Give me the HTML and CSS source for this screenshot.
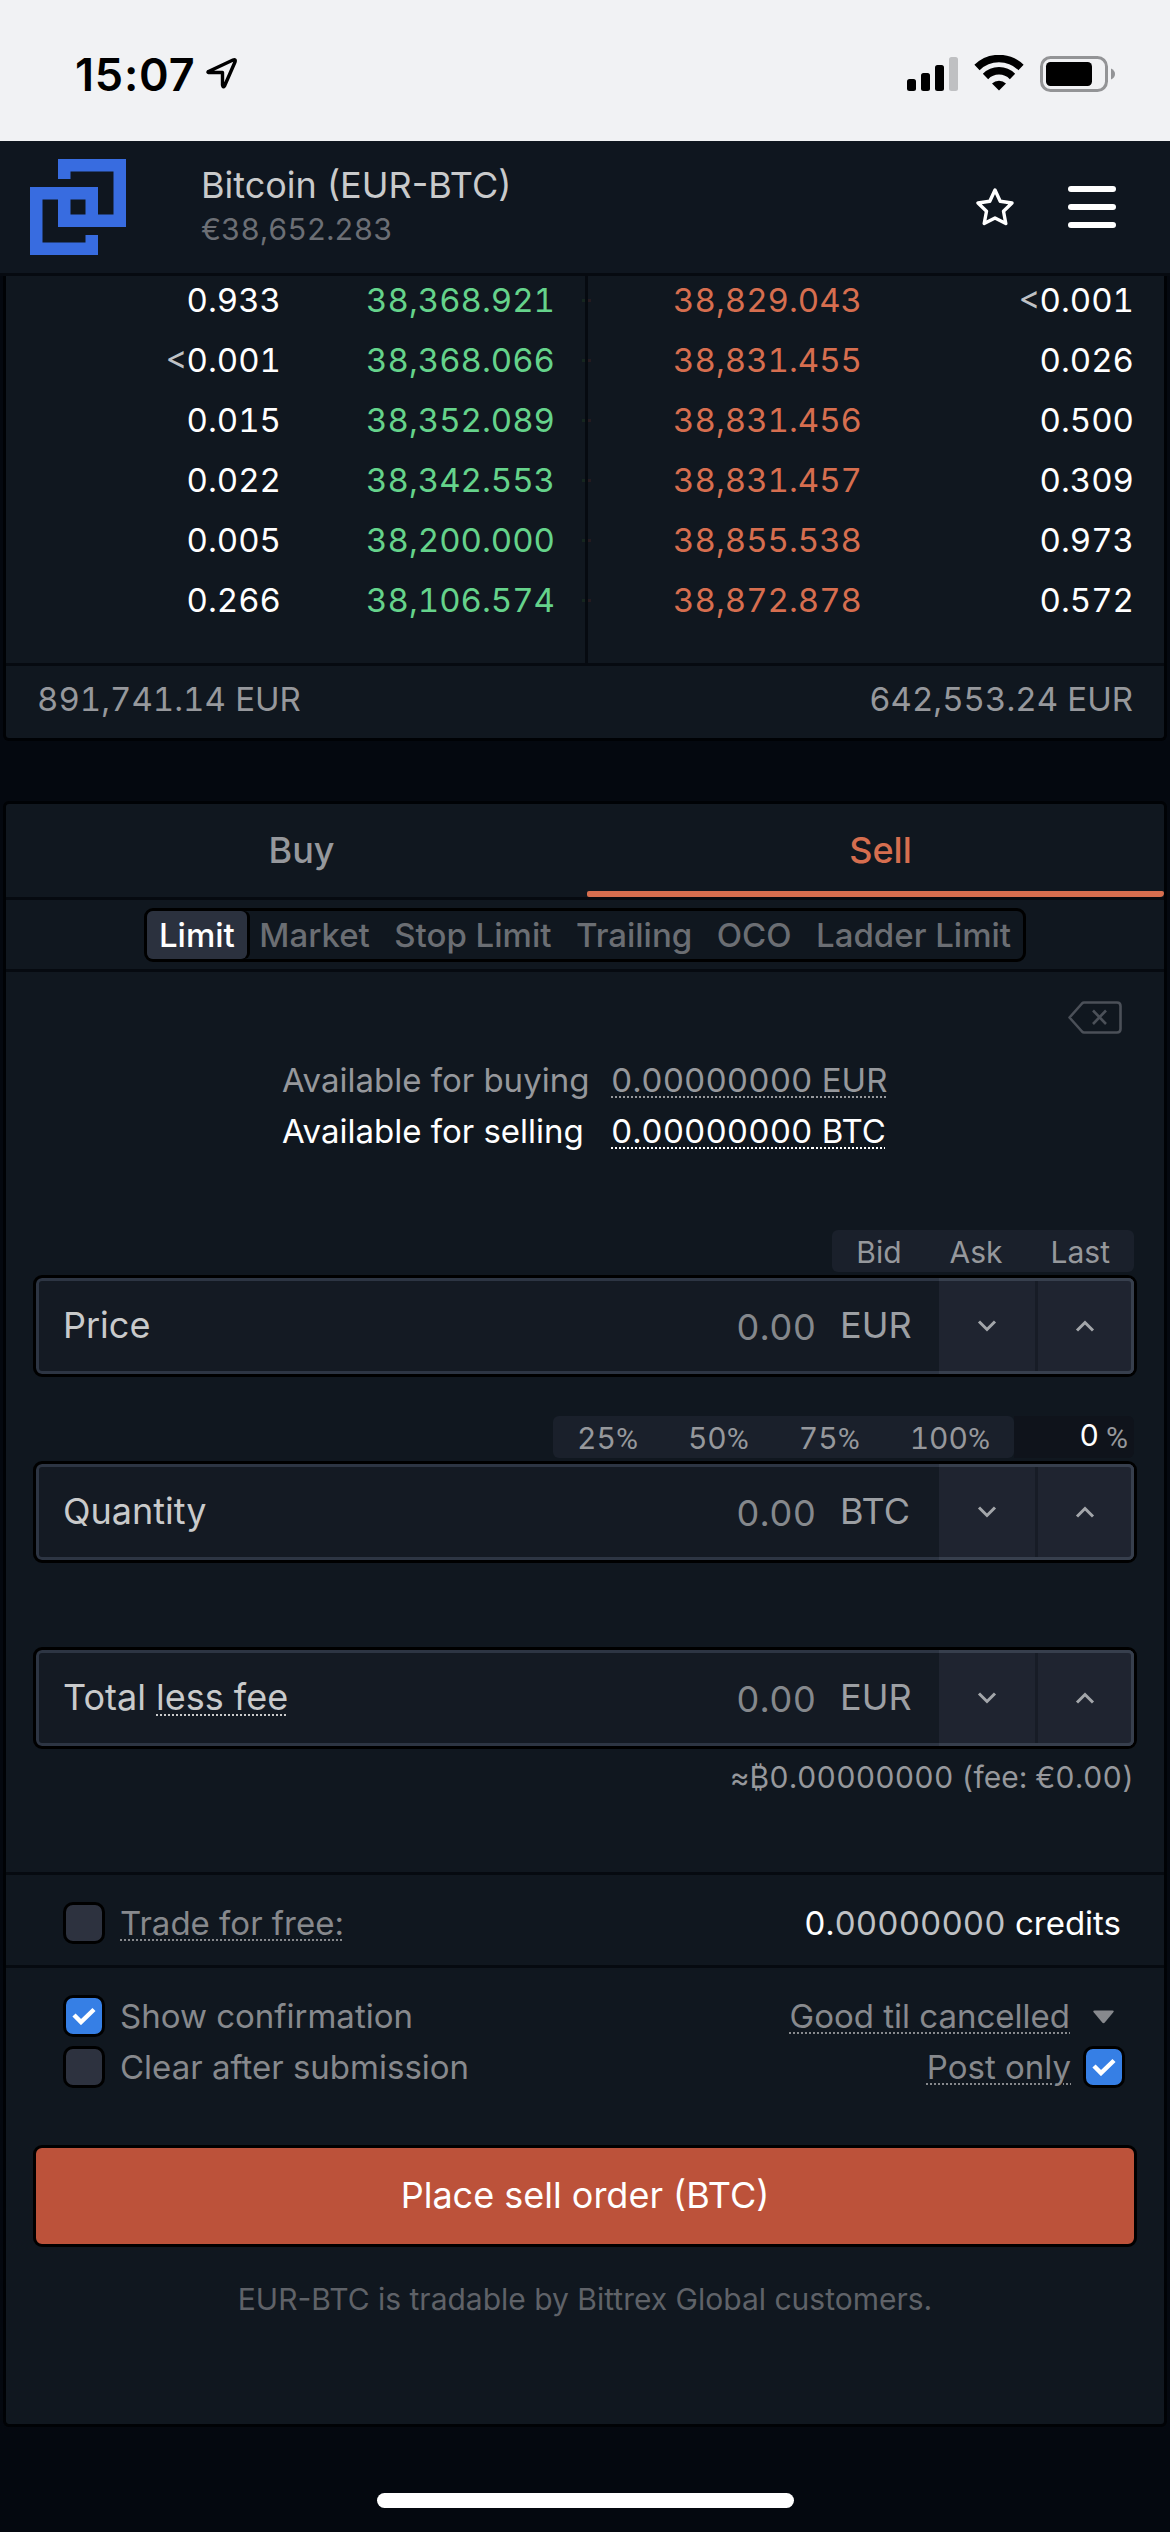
FILE: index.html
```html
<!DOCTYPE html>
<html lang="en">
<head>
  <meta charset="UTF-8">
  <meta name="viewport" content="width=device-width, initial-scale=1.0">
  <title>Bitcoin (EUR-BTC)</title>
  <link rel="stylesheet" href="styles.css">
</head>
<body>
  <div class="status-bar">
    <span class="time">15:07</span>
    <svg class="location" width="32" height="32" viewBox="0 0 32 32"><path d="M2.5 14.5 L27 3 Q30 1.8 29 5 L18.500 29 Q17 31 16.500 28 V15.500 H4 Q1 15.500 2.500 14.500 Z" fill="none" stroke="#000" stroke-width="3.4" stroke-linejoin="round"/></svg>
    <div class="status-icons">
      <svg width="51" height="36" viewBox="0 0 51 36">
        <rect x="0" y="23" width="9" height="12" rx="2.500"/>
        <rect x="14" y="17" width="9" height="18" rx="2.500"/>
        <rect x="28" y="9" width="9" height="26" rx="2.500"/>
        <rect x="42" y="1" width="9" height="34" rx="2.500" fill="#bfc0c2"/>
      </svg>
      <svg class="wifi" width="50" height="36" viewBox="0 0 50 36">
        <path d="M3 12.500 A31.500 31.500 0 0 1 47 12.500" fill="none" stroke="#000" stroke-width="7.500"/>
        <path d="M11.500 21.500 A19 19 0 0 1 38.500 21.500" fill="none" stroke="#000" stroke-width="7.500"/>
        <path d="M25 35.500 L18 28.500 A10 10 0 0 1 32 28.500 Z"/>
      </svg>
      <svg width="76" height="36" viewBox="0 0 76 36">
        <rect x="1.500" y="1.500" width="65" height="33" rx="9" fill="none" stroke="#939496" stroke-width="3"/>
        <rect x="6" y="6" width="46" height="24" rx="4.500"/>
        <path d="M71 12.500 Q75 14.500 75 18 Q75 21.500 71 23.500 Z" fill="#939496"/>
      </svg>
    </div>
  </div>

  <header class="header">
    <svg class="logo" width="96" height="96" viewBox="0 0 96 96" fill="none" stroke="#386ce0" stroke-width="12.500">
      <path d="M34.250 20 V6.250 H89.750 V61.750 H34.250 V34"/>
      <path d="M61.750 76 V89.750 H6.250 V34.250 H61.750 V62"/>
    </svg>
    <div class="market">
      <h1>Bitcoin (EUR-BTC)</h1>
      <div class="last-price">€38,652.283</div>
    </div>
    <svg class="star" width="38" height="38" viewBox="0 0 38 38"><path d="M19 2 L24.200 13.300 L36 15 L27.500 23.300 L29.800 35.500 L19 30 L8.200 35.500 L10.500 23.300 L2 15 L13.800 13.300 Z" fill="none" stroke="#fff" stroke-width="3.400" stroke-linejoin="round"/></svg>
    <div class="menu"><i></i><i></i><i></i></div>
  </header>

  <section class="panel order-book">
    <div class="book">
      <div class="side bids">
        <div class="row"><span class="amount">0.933</span><span class="price">38,368.921</span></div>
        <div class="row"><span class="amount"><em>&lt;</em>0.001</span><span class="price">38,368.066</span></div>
        <div class="row"><span class="amount">0.015</span><span class="price">38,352.089</span></div>
        <div class="row"><span class="amount">0.022</span><span class="price">38,342.553</span></div>
        <div class="row"><span class="amount">0.005</span><span class="price">38,200.000</span></div>
        <div class="row"><span class="amount">0.266</span><span class="price">38,106.574</span></div>
      </div>
      <div class="side asks">
        <div class="row"><span class="price">38,829.043</span><span class="amount"><em>&lt;</em>0.001</span></div>
        <div class="row"><span class="price">38,831.455</span><span class="amount">0.026</span></div>
        <div class="row"><span class="price">38,831.456</span><span class="amount">0.500</span></div>
        <div class="row"><span class="price">38,831.457</span><span class="amount">0.309</span></div>
        <div class="row"><span class="price">38,855.538</span><span class="amount">0.973</span></div>
        <div class="row"><span class="price">38,872.878</span><span class="amount">0.572</span></div>
      </div>
    </div>
    <div class="totals">
      <span><b>891,741.14</b> EUR</span>
      <span><b>642,553.24</b> EUR</span>
    </div>
  </section>

  <section class="panel order-form">
    <div class="tabs">
      <div class="tab">Buy</div>
      <div class="tab active">Sell</div>
    </div>
    <div class="types">
      <div class="type-list">
        <span class="type active">Limit</span>
        <span class="type">Market</span>
        <span class="type">Stop Limit</span>
        <span class="type">Trailing</span>
        <span class="type">OCO</span>
        <span class="type">Ladder Limit</span>
      </div>
    </div>

    <div class="clear">
      <svg width="54" height="33" viewBox="0 0 54 33" fill="none" stroke="#4b5058" stroke-width="2.600" stroke-linejoin="round"><path d="M16 1.500 H49 Q52.500 1.500 52.500 5 V28 Q52.500 31.500 49 31.500 H16 Q15 31.500 14 30.500 L1.500 16.500 L14 2.500 Q15 1.500 16 1.500 Z"/><path d="M25 9.500 L38 23 M38 9.500 L25 23"/></svg>
    </div>

    <div class="available">
      <span>Available for buying</span><span class="hint"><b>0.00000000</b> EUR</span>
      <span class="current">Available for selling</span><span class="hint current"><b>0.00000000</b> BTC</span>
    </div>

    <div class="presets">
      <div class="preset-list price-presets"><span>Bid</span><span>Ask</span><span>Last</span></div>
    </div>
    <div class="field">
      <label>Price</label>
      <span class="value">0.00</span><span class="unit">EUR</span>
      <button class="step"><svg width="20" height="14" viewBox="0 0 20 14"><path d="M2 2.500 L10 10.500 L18 2.500"/></svg></button>
      <button class="step up"><svg width="20" height="14" viewBox="0 0 20 14"><path d="M2 11.500 L10 3.500 L18 11.500"/></svg></button>
    </div>

    <div class="presets quantity">
      <div class="preset-list percent-presets"><span><b>25</b><small>%</small></span><span><b>50</b><small>%</small></span><span><b>75</b><small>%</small></span><span><b>100</b><small>%</small></span></div>
      <div class="percent"><b>0</b><small>%</small></div>
    </div>
    <div class="field">
      <label>Quantity</label>
      <span class="value">0.00</span><span class="unit">BTC</span>
      <button class="step"><svg width="20" height="14" viewBox="0 0 20 14"><path d="M2 2.500 L10 10.500 L18 2.500"/></svg></button>
      <button class="step up"><svg width="20" height="14" viewBox="0 0 20 14"><path d="M2 11.500 L10 3.500 L18 11.500"/></svg></button>
    </div>

    <div class="field total">
      <label>Total <span class="hint">less fee</span></label>
      <span class="value">0.00</span><span class="unit">EUR</span>
      <button class="step"><svg width="20" height="14" viewBox="0 0 20 14"><path d="M2 2.500 L10 10.500 L18 2.500"/></svg></button>
      <button class="step up"><svg width="20" height="14" viewBox="0 0 20 14"><path d="M2 11.500 L10 3.500 L18 11.500"/></svg></button>
    </div>
    <div class="estimate">≈₿0.00000000 (fee: €0.00)</div>

    <div class="credits">
      <i class="checkbox"></i><span class="label hint">Trade for free:</span>
      <span class="balance"><b>0.<em>00000000</em></b> credits</span>
    </div>

    <div class="options">
      <div class="option">
        <i class="checkbox checked"><svg width="24" height="18" viewBox="0 0 24 18"><path d="M2 8 L9 15 L22 2.500"/></svg></i>
        <span class="label">Show confirmation</span>
        <span class="right hint">Good til cancelled</span>
        <svg class="caret" width="21" height="14" viewBox="0 0 21 14"><path d="M1.500 0.500 H19.500 Q21.500 0.500 20.300 2.300 L11.800 12.500 Q10.500 13.800 9.200 12.500 L0.700 2.300 Q-0.500 0.500 1.500 0.500 Z" fill="#87898d"/></svg>
      </div>
      <div class="option">
        <i class="checkbox"></i>
        <span class="label">Clear after submission</span>
        <span class="right hint">Post only</span>
        <i class="checkbox checked"><svg width="24" height="18" viewBox="0 0 24 18"><path d="M2 8 L9 15 L22 2.500"/></svg></i>
      </div>
    </div>

    <button class="submit">Place sell order (BTC)</button>
    <p class="note">EUR-BTC is tradable by Bittrex Global customers.</p>
  </section>

  <div class="home-indicator"></div>
</body>
</html>
```

FILE: styles.css
```css
* {
  box-sizing: border-box;
}

body {
  margin: 0;
  width: 1170px;
  height: 2532px;
  overflow: hidden;
  display: flex;
  flex-direction: column;
  background: #04080f;
  color: #96989c;
  font-family: Inter, "Liberation Sans", sans-serif;
  font-size: 33px;
  white-space: nowrap;
}

b {
  font-weight: 400;
}

b, .row, .value, .last-price, .estimate {
  font-feature-settings: "tnum";
}

em {
  font-style: normal;
  color: #bfc1c4;
}

button {
  border: 0;
  padding: 0;
  font: inherit;
  color: inherit;
}

.hint {
  text-decoration: underline dotted 2px;
  text-underline-offset: 4px;
}

/* Status bar */
.status-bar {
  flex: none;
  height: 141px;
  display: flex;
  align-items: flex-start;
  padding: 55px 54px 0 75px;
  background: #f1f2f4;
}

.time {
  color: #000;
  font-size: 45px;
  font-weight: 600;
  line-height: 39px;
  letter-spacing: 0.8px;
}

.location {
  margin: 2px 0 0 11px;
}

.status-icons {
  display: flex;
  margin-left: auto;
}

.status-icons svg:first-child {
  margin-top: 1px;
}

.wifi {
  margin: 0 16px 0 16px;
}

.status-icons svg:last-child {
  margin-top: 1px;
}

/* Header */
.header {
  flex: none;
  position: relative;
  z-index: 1;
  height: 135px;
  display: flex;
  align-items: flex-start;
  padding: 18px 54px 0 30px;
  background: #0f161f;
  border-bottom: 3px solid #060a10;
}

.market {
  flex: 1;
  padding-left: 75px;
}

h1 {
  margin: 0;
  color: #c9cacb;
  font-size: 36px;
  font-weight: 400;
  line-height: 52px;
}

.last-price {
  color: #6c6f75;
  font-size: 30px;
  line-height: 36px;
}

.star {
  margin: 29px 54px 0 0;
}

.menu {
  display: flex;
  flex-direction: column;
  gap: 12px;
  padding-top: 27px;
}

.menu i {
  width: 48px;
  height: 6px;
  border-radius: 3px;
  background: #fff;
}

/* Panels */
.panel {
  flex: none;
  margin: 0 3px 0 3px;
  border: 3px solid #000205;
  border-radius: 6px;
  background: #10171f;
}

/* Order book */
.order-book {
  border-top: 0;
  border-radius: 0 0 6px 6px;
}

.book {
  height: 390px;
  display: flex;
  border-bottom: 3px solid #060a10;
}

.side {
  flex: 1;
  margin-top: -6px;
}

.bids {
  flex: 0 0 582px;
  border-right: 3px solid #060a10;
}

.row {
  height: 60px;
  display: flex;
  line-height: 60px;
  text-align: right;
  background: linear-gradient(#16261f, #16261f) right 29px / 3px 3px no-repeat;
}

.asks .row {
  background: linear-gradient(#251b20, #251b20) left 29px / 3px 3px no-repeat;
  background-position: 0 29px;
}

.amount {
  color: #fff;
}

.bids .amount {
  width: 275px;
}

.bids .price {
  width: 274px;
  color: #65d38b;
}

.asks .price {
  width: 274px;
  color: #d66e4f;
}

.asks .amount {
  width: 272px;
}

.totals {
  height: 72px;
  display: flex;
  justify-content: space-between;
  padding: 0 31px;
  line-height: 66px;
}

/* Order form */
.order-form {
  height: 1626px;
  margin-top: 60px;
}

.tabs {
  height: 96px;
  display: flex;
  border-bottom: 3px solid #060a10;
}

.tab {
  flex: 1;
  position: relative;
  height: 93px;
  padding-left: 12px;
  text-align: center;
  font-size: 36px;
  font-weight: 500;
  line-height: 92px;
}

.tab.active {
  color: #d66e4f;
}

.tab.active::after {
  content: "";
  position: absolute;
  left: 2px;
  right: 0;
  bottom: 0;
  height: 6px;
  border-radius: 3px 3px 6px 3px;
  background: #d66e4f;
}

.types {
  height: 72px;
  display: flex;
  justify-content: center;
  padding-top: 8px;
  border-bottom: 3px solid #060a10;
}

.type-list {
  height: 54px;
  display: flex;
  border: 3px solid #000;
  border-radius: 9px;
}

.type {
  padding: 0 12.25px;
  color: #6b6e73;
  font-weight: 500;
  line-height: 48px;
}

.type.active {
  color: #fff;
  background: #2b313e;
  border-radius: 6px;
  box-shadow: 3px 0 0 #000;
}

.clear {
  height: 72px;
  display: flex;
  justify-content: flex-end;
  padding: 29px 42px 0 0;
}

.available {
  display: grid;
  grid-template-columns: 329px auto;
  padding: 11px 0 0 276px;
  line-height: 51px;
}

.available .current {
  color: #fff;
}

.available .hint {
  justify-self: start;
}

.presets {
  height: 42px;
  display: flex;
  justify-content: flex-end;
  margin: 73px 30px 3px 0;
  font-size: 30px;
  line-height: 44px;
}

.preset-list {
  display: flex;
  padding: 0 24px;
  border-radius: 6px;
  background: #1a202b;
}

.price-presets {
  gap: 48px;
}

.percent-presets {
  gap: 50px;
}

.presets small {
  font-family: Roboto, sans-serif;
  font-size: 30px;
}

.presets.quantity {
  margin-top: 39px;
}

.percent {
  width: 120px;
  display: flex;
  justify-content: flex-end;
  padding-right: 6px;
  background: #0f131b;
  border-radius: 0 6px 6px 0;
}

.percent b {
  color: #fff;
  line-height: 39px;
}

.percent small {
  margin-left: 7px;
}

.field {
  height: 102px;
  display: flex;
  margin: 0 27px;
  border: 3px solid #000;
  border-radius: 9px;
  background: #141a23;
  box-shadow: inset 0 0 0 3px #2d3543;
  font-size: 36px;
  line-height: 95px;
}

.field label {
  flex: 1;
  padding-left: 27px;
  color: #c9cacb;
}

.value {
  color: #85888c;
  line-height: 98px;
}

.unit {
  width: 99px;
  margin-left: 24px;
  color: #9c9fa3;
}

.step {
  width: 99px;
  padding-right: 3px;
  display: flex;
  align-items: center;
  justify-content: center;
  background: #1f2430;
  box-shadow: inset 0 3px #373f4d, inset 0 -3px #373f4d, inset -3px 0 #171c26;
}

.step.up {
  width: 96px;
  border-radius: 0 6px 6px 0;
  box-shadow: inset 0 3px #373f4d, inset 0 -3px #373f4d, inset -3px 0 #373f4d;
}

.step path {
  fill: none;
  stroke: #a3a6aa;
  stroke-width: 3;
}

.field.total {
  margin-top: 84px;
}

.estimate {
  height: 123px;
  padding: 6px 30px 0 0;
  text-align: right;
  font-size: 30px;
  line-height: 44px;
  letter-spacing: 0.1px;
}

.checkbox {
  flex: none;
  width: 42px;
  height: 42px;
  display: flex;
  align-items: center;
  justify-content: center;
  border: 3px solid #000;
  border-radius: 10px;
  background: #2d323f;
}

.checkbox.checked {
  background: #367fe5;
}

.checkbox path {
  fill: none;
  stroke: #fff;
  stroke-width: 4.500;
}

.label {
  margin-left: 15px;
  color: #87898d;
}

.credits {
  height: 96px;
  display: flex;
  align-items: center;
  padding: 6px 43px 0 57px;
  border: solid #060a10;
  border-width: 3px 0;
}

.balance {
  margin-left: auto;
  color: #fff;
}

.options {
  display: flex;
  flex-direction: column;
  gap: 9px;
  padding: 27px 39px 0 57px;
}

.option {
  display: flex;
  align-items: center;
  line-height: 42px;
}

.right {
  margin: 0 12px 0 auto;
  color: #87898d;
}

.caret {
  margin: 2px 11px 0 11px;
}

.submit {
  width: 1104px;
  height: 102px;
  margin: 57px 27px 0;
  padding-bottom: 2px;
  border: 3px solid #000;
  border-radius: 9px;
  background: #bc523a;
  color: #fff;
  font-size: 36px;
  line-height: 93px;
}

.note {
  margin: 30px 0 0;
  color: #5f6268;
  text-align: center;
  font-size: 30px;
  line-height: 44px;
}

/* iOS home indicator */
.home-indicator {
  flex: none;
  width: 417px;
  height: 15px;
  margin: 66px 0 0 377px;
  border-radius: 8px;
  background: #fff;
}
```
